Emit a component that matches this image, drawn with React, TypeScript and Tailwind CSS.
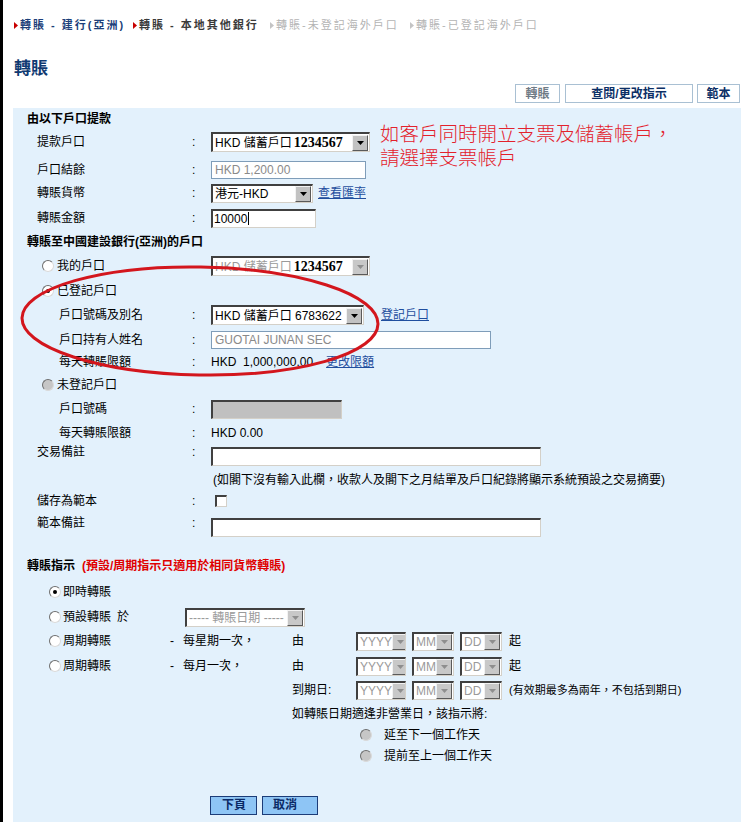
import React from "react";

function Tri({ gray }: { gray?: boolean }) {
  return (
    <svg width="4" height="7" viewBox="0 0 4 7" className="shrink-0">
      <polygon points="0,0 4,3.5 0,7" fill={gray ? "#c4c4c4" : "#c80000"} />
    </svg>
  );
}

function Arrow({ disabled = false }: { disabled?: boolean }) {
  return (
    <span
      className={
        "ml-auto mr-[1px] flex h-[16px] w-[16px] shrink-0 items-center justify-center border border-t-[#f2f2f2] border-l-[#f2f2f2] border-b-[#5a5a5a] border-r-[#5a5a5a] " +
        (disabled ? "bg-[#c8c8c8]" : "bg-[#c2c2c2]")
      }
    >
      <svg width="7" height="4" viewBox="0 0 7 4">
        <polygon points="0,0 7,0 3.5,4" fill={disabled ? "#8e8e8e" : "#000"} />
      </svg>
    </span>
  );
}

function Select({
  cls,
  children,
  disabled,
}: {
  cls: string;
  children: React.ReactNode;
  disabled?: boolean;
}) {
  return (
    <div
      className={
        "flex shrink-0 items-center overflow-hidden bg-white border-t-2 border-l-2 border-b border-r border-t-[#404040] border-l-[#404040] border-b-[#d4d0c8] border-r-[#d4d0c8] pl-[2px] " +
        cls +
        (disabled ? " text-[#9a9a9a]" : " text-black")
      }
    >
      <span className="flex items-baseline whitespace-nowrap">{children}</span>
      <Arrow disabled={disabled} />
    </div>
  );
}

function Radio({ checked, disabled }: { checked?: boolean; disabled?: boolean }) {
  return (
    <span
      className={
        "flex h-[12px] w-[12px] shrink-0 items-center justify-center rounded-full border border-t-[#6e6e6e] border-l-[#6e6e6e] border-b-[#dadada] border-r-[#dadada] " +
        (disabled ? "bg-[#c6c6c6]" : "bg-white")
      }
    >
      {checked && <span className="h-[4px] w-[4px] rounded-full bg-black" />}
    </span>
  );
}

function Label({ text, indent }: { text: string; indent?: boolean }) {
  return (
    <>
      <div className={"w-[179px] shrink-0 " + (indent ? "pl-[46px]" : "pl-[24px]")}>{text}</div>
      <div className="w-[19px] shrink-0">:</div>
    </>
  );
}

const inset =
  "border-t-2 border-l-2 border-b border-r border-t-[#404040] border-l-[#404040] border-b-[#d4d0c8] border-r-[#d4d0c8]";

const link = "text-[#1f4e9e] underline";

export default function App() {
  return (
    <div className="flex h-[822px] flex-col overflow-hidden border-l-[3px] border-black bg-white text-[12px] leading-[14px] text-black [font-family:'Liberation_Sans','Noto_Sans_CJK_TC',sans-serif]">
      {/* breadcrumb */}
      <div className="mt-[18px] flex h-[14px] items-center pl-[11px] text-[11px] tracking-[2px]">
        <div className="flex w-[119px] shrink-0 items-center gap-[2px]">
          <Tri />
          <span className="whitespace-nowrap font-bold text-[#1d3f7a]">轉賬 - 建行(亞洲)</span>
        </div>
        <div className="flex w-[137px] shrink-0 items-center gap-[2px]">
          <Tri />
          <span className="whitespace-nowrap font-bold text-[#3a3a3a]">轉賬 - 本地其他銀行</span>
        </div>
        <div className="flex w-[140px] shrink-0 items-center gap-[2px]">
          <Tri gray />
          <span className="whitespace-nowrap text-[#b4b4b4]">轉賬-未登記海外戶口</span>
        </div>
        <div className="flex shrink-0 items-center gap-[2px]">
          <Tri gray />
          <span className="whitespace-nowrap text-[#b4b4b4]">轉賬-已登記海外戶口</span>
        </div>
      </div>

      {/* title */}
      <div className="mt-[26px] flex h-[22px] items-center pl-[11px] text-[17px] font-bold text-[#0f3a72]">
        轉賬
      </div>

      {/* tabs */}
      <div className="mt-[4px] flex h-[19px] justify-end pr-[6px] font-bold">
        <div className="flex w-[45px] items-center justify-center border border-[#a9c0d3] bg-white text-[#6f7b86]">
          轉賬
        </div>
        <div className="ml-[5px] flex w-[128px] items-center justify-center border border-[#a9c0d3] bg-white text-[#0c2f66]">
          查閱/更改指示
        </div>
        <div className="ml-[4px] flex w-[43px] items-center justify-center border border-[#a9c0d3] bg-white text-[#0c2f66]">
          範本
        </div>
      </div>

      {/* panel */}
      <div className="relative ml-[10px] mt-[5px] flex w-[728px] flex-1 flex-col bg-[#e3f1fc]">
        <div className="mt-[1px] flex h-[20px] items-center pl-[14px] font-bold">由以下戶口提款</div>

        <div className="mt-[3px] flex h-[20px] items-center">
          <Label text="提款戶口" />
          <Select cls="w-[159px] h-[20px]">
            <span>HKD 儲蓄戶口</span>
            <span className="ml-[2px] text-[14px] font-bold [font-family:'Liberation_Serif',serif]">1234567</span>
          </Select>
        </div>

        <div className="mt-[8px] flex h-[20px] items-center">
          <Label text="戶口結餘" />
          <div className="flex h-[18px] w-[155px] items-center border border-[#7f9db9] bg-white pl-[3px] text-[#8a8a8a]">
            HKD 1,200.00
          </div>
        </div>

        <div className="mt-[3px] flex h-[20px] items-center">
          <Label text="轉賬貨幣" />
          <Select cls="w-[102px] h-[19px]">港元-HKD</Select>
          <span className={"ml-[5px] " + link}>查看匯率</span>
        </div>

        <div className="mt-[5px] flex h-[20px] items-center">
          <Label text="轉賬金額" />
          <div className={"flex h-[19px] w-[105px] items-center bg-white pl-[1px] " + inset}>
            10000
            <span className="ml-[1px] h-[13px] w-[1px] bg-black" />
          </div>
        </div>

        <div className="mt-[4px] flex h-[20px] items-center pl-[14px] font-bold">
          轉賬至中國建設銀行(亞洲)的戶口
        </div>

        <div className="mt-[4px] flex h-[20px] items-center">
          <div className="flex w-[198px] shrink-0 items-center pl-[29px]">
            <Radio />
            <span className="ml-[3px]">我的戶口</span>
          </div>
          <Select cls="w-[159px] h-[20px]" disabled>
            <span>HKD 儲蓄戶口</span>
            <span className="ml-[2px] text-[14px] font-bold text-black [font-family:'Liberation_Serif',serif]">1234567</span>
          </Select>
        </div>

        <div className="mt-[5px] flex h-[20px] items-center">
          <div className="flex w-[198px] shrink-0 items-center pl-[29px]">
            <Radio checked />
            <span className="ml-[3px]">已登記戶口</span>
          </div>
        </div>

        <div className="mt-[4px] flex h-[20px] items-center">
          <Label text="戶口號碼及別名" indent />
          <Select cls="w-[153px] h-[20px]">HKD 儲蓄戶口 6783622</Select>
          <span className={"ml-[17px] " + link}>登記戶口</span>
        </div>

        <div className="mt-[5px] flex h-[20px] items-center">
          <Label text="戶口持有人姓名" indent />
          <div className="flex h-[18px] w-[280px] items-center border border-[#7f9db9] bg-white pl-[3px] text-[#8a8a8a]">
            GUOTAI JUNAN SEC
          </div>
        </div>

        <div className="mt-[2px] flex h-[20px] items-center">
          <Label text="每天轉賬限額" indent />
          <span className="whitespace-pre">HKD  1,000,000.00</span>
          <span className={"ml-[13px] " + link}>更改限額</span>
        </div>

        <div className="mt-[3px] flex h-[20px] items-center">
          <div className="flex w-[198px] shrink-0 items-center pl-[29px]">
            <Radio disabled />
            <span className="ml-[3px]">未登記戶口</span>
          </div>
        </div>

        <div className="mt-[4px] flex h-[20px] items-center">
          <Label text="戶口號碼" indent />
          <div className={"h-[19px] w-[131px] bg-[#c0c0c0] " + inset} />
        </div>

        <div className="mt-[4px] flex h-[20px] items-center">
          <Label text="每天轉賬限額" indent />
          <span>HKD 0.00</span>
        </div>

        <div className="mt-[3px] flex h-[20px] items-start leading-[12px]">
          <Label text="交易備註" />
          <div className={"mt-[1px] h-[19px] w-[330px] bg-white " + inset} />
        </div>

        <div className="mt-[4px] flex h-[20px] items-center pl-[200px] whitespace-nowrap">
          (如閣下沒有輸入此欄，收款人及閣下之月結單及戶口紀錄將顯示系統預設之交易摘要)
        </div>

        <div className="mt-[1px] flex h-[20px] items-center">
          <Label text="儲存為範本" />
          <span
            className={
              "ml-[4px] h-[12px] w-[12px] bg-white border-t-2 border-l-2 border-b border-r border-t-[#404040] border-l-[#404040] border-b-[#d4d0c8] border-r-[#d4d0c8]"
            }
          />
        </div>

        <div className="mt-[6px] flex h-[20px] items-start leading-[12px]">
          <Label text="範本備註" />
          <div className={"mt-[1px] h-[19px] w-[330px] bg-white " + inset} />
        </div>

        <div className="mt-[19px] flex h-[20px] items-center pl-[14px] font-bold">
          <span>轉賬指示</span>
          <span className="ml-[7px] text-[#e00000]">(預設/周期指示只適用於相同貨幣轉賬)</span>
        </div>

        <div className="mt-[6px] flex h-[20px] items-center pl-[36px]">
          <Radio checked />
          <span className="ml-[2px]">即時轉賬</span>
        </div>

        <div className="mt-[5px] flex h-[20px] items-center">
          <div className="flex w-[172px] shrink-0 items-center pl-[36px]">
            <Radio />
            <span className="ml-[2px]">預設轉賬</span>
            <span className="ml-[6px]">於</span>
          </div>
          <Select cls="w-[120px] h-[19px]" disabled>
            ----- 轉賬日期 -----
          </Select>
        </div>

        {["每星期一次，", "每月一次，"].map((t, i) => (
          <div key={t} className={"flex h-[20px] items-center " + (i === 0 ? "mt-[4px]" : "mt-[5px]")}>
            <div className="flex w-[157px] shrink-0 items-center pl-[36px]">
              <Radio />
              <span className="ml-[2px]">周期轉賬</span>
            </div>
            <div className="w-[13px] shrink-0">-</div>
            <div className="w-[109px] shrink-0">{t}</div>
            <div className="w-[64px] shrink-0">由</div>
            <Select cls="w-[50px] h-[19px]" disabled>YYYY</Select>
            <Select cls="ml-[6px] w-[42px] h-[19px]" disabled>MM</Select>
            <Select cls="ml-[6px] w-[42px] h-[19px]" disabled>DD</Select>
            <span className="ml-[7px]">起</span>
          </div>
        ))}

        <div className="mt-[4px] flex h-[20px] items-center pl-[279px]">
          <div className="w-[64px] shrink-0">到期日:</div>
          <Select cls="w-[50px] h-[19px]" disabled>YYYY</Select>
          <Select cls="ml-[6px] w-[42px] h-[19px]" disabled>MM</Select>
          <Select cls="ml-[6px] w-[42px] h-[19px]" disabled>DD</Select>
          <span className="ml-[7px] text-[11px] whitespace-nowrap">(有效期最多為兩年，不包括到期日)</span>
        </div>

        <div className="mt-[4px] flex h-[20px] items-center pl-[279px]">
          如轉賬日期適逢非營業日，該指示將:
        </div>

        <div className="mt-[1px] flex h-[20px] items-center pl-[347px]">
          <Radio disabled />
          <span className="ml-[12px]">延至下一個工作天</span>
        </div>
        <div className="mt-[1px] flex h-[20px] items-center pl-[347px]">
          <Radio disabled />
          <span className="ml-[12px]">提前至上一個工作天</span>
        </div>

        <div className="mt-[29px] flex h-[20px] items-center pl-[197px] font-bold text-[#0b2a66]">
          <div className="flex h-[19px] w-[47px] items-center border border-[#1c3c78] bg-[#8ec5f5] pl-[11px]">
            下頁
          </div>
          <div className="ml-[5px] flex h-[19px] w-[56px] items-center border border-[#1c3c78] bg-[#8ec5f5] pl-[10px]">
            取消
          </div>
        </div>

        {/* annotation overlay */}
        <div className="pointer-events-none absolute left-[367px] top-[13px] whitespace-nowrap text-[19.5px] font-light leading-[24px] text-[#e3222c] [font-family:'Noto_Sans_CJK_TC',sans-serif]">
          <div>如客戶同時開立支票及儲蓄帳戶，</div>
          <div>請選擇支票帳戶</div>
        </div>
        <svg
          className="pointer-events-none absolute left-0 top-0"
          width="728"
          height="400"
          viewBox="0 0 728 400"
        >
          <ellipse
            cx="187"
            cy="213"
            rx="178"
            ry="54"
            transform="rotate(1 187 213)"
            fill="none"
            stroke="#d3161d"
            strokeWidth="3"
          />
        </svg>
      </div>
    </div>
  );
}
